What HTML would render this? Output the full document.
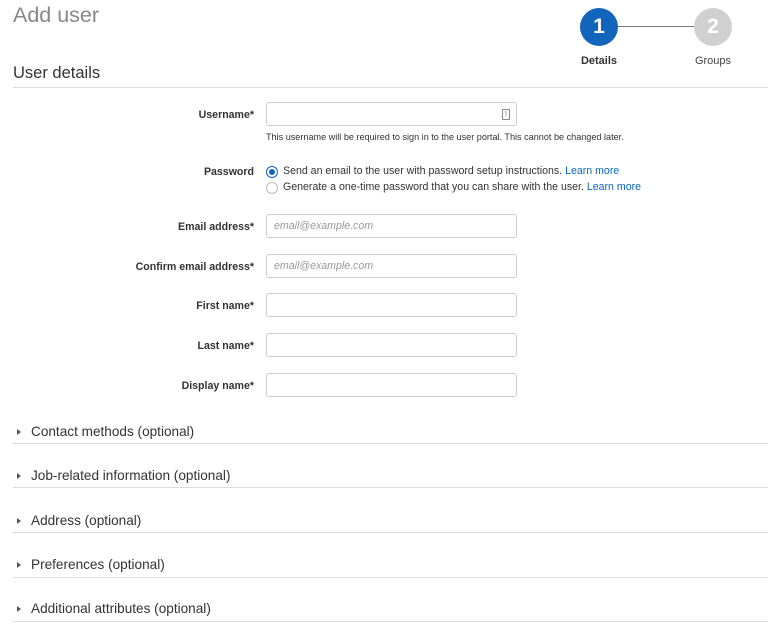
<!DOCTYPE html>
<html><head><style>
body{margin:0;width:768px;height:644px;background:#fff;font-family:"Liberation Sans",Arial,sans-serif;position:relative;overflow:hidden;color:#333}
.a{position:absolute;white-space:nowrap}
.lbl{position:absolute;right:514px;font-size:10.6px;font-weight:bold;color:#333;line-height:14px}
.inp{position:absolute;left:266px;width:249px;height:22px;border:1px solid #ccc;border-radius:3px;background:#fff}
.ph{position:absolute;left:7px;top:5px;font-size:10.6px;font-style:italic;color:#999}
.sec{position:absolute;left:31px;font-size:13.6px;color:#333;line-height:16px}
.tri{position:absolute;left:17px;width:0;height:0;border-left:4px solid #555;border-top:3px solid transparent;border-bottom:3px solid transparent}
.hl{position:absolute;left:13px;right:0;height:1px;background:#ddd}
.rad{position:absolute;left:266px;width:10px;height:10px;border-radius:50%;border:1px solid #bbb;background:#fff}
a{color:#0a66c2;text-decoration:none}
</style></head><body>
<div class="a" style="left:13px;top:3px;font-size:21.5px;color:#888">Add user</div>
<div class="a" style="left:598px;top:26px;width:116px;height:1px;background:#777"></div>
<div class="a" style="left:580px;top:8px;width:38px;height:38px;border-radius:50%;background:#1166bb;color:#fff;font-size:21px;font-weight:bold;text-align:center;line-height:38px">1</div>
<div class="a" style="left:694px;top:8px;width:38px;height:38px;border-radius:50%;background:#d0d0d0;color:#fff;font-size:21px;font-weight:bold;text-align:center;line-height:38px">2</div>
<div class="a" style="left:570px;top:55px;width:58px;text-align:center;font-size:11px;font-weight:bold">Details</div>
<div class="a" style="left:684px;top:55px;width:58px;text-align:center;font-size:11px;color:#444">Groups</div>
<div class="a" style="left:13px;top:64px;font-size:16.5px;color:#333">User details</div>
<div class="hl" style="top:87px"></div>

<div class="lbl" style="top:108px">Username*</div>
<div class="inp" style="top:102px"><div style="position:absolute;right:6px;top:6px;width:6px;height:9px;border:1px solid #888;border-radius:1px;font-size:7px;line-height:9px;text-align:center;color:#555">!</div></div>
<div class="a" style="left:266px;top:132px;font-size:9.1px;color:#333">This username will be required to sign in to the user portal. This cannot be changed later.</div>

<div class="lbl" style="top:165px">Password</div>
<div class="rad" style="top:166px;border-color:#1166bb"><div style="position:absolute;left:2px;top:2px;width:6px;height:6px;border-radius:50%;background:#1166bb"></div></div>
<div class="a" style="left:283px;top:165px;font-size:10.6px">Send an email to the user with password setup instructions. <a>Learn more</a></div>
<div class="rad" style="top:182px"></div>
<div class="a" style="left:283px;top:181px;font-size:10.6px">Generate a one-time password that you can share with the user. <a>Learn more</a></div>

<div class="lbl" style="top:220px">Email address*</div>
<div class="inp" style="top:214px"><div class="ph">email@example.com</div></div>
<div class="lbl" style="top:260px">Confirm email address*</div>
<div class="inp" style="top:254px"><div class="ph">email@example.com</div></div>
<div class="lbl" style="top:299px">First name*</div>
<div class="inp" style="top:293px"></div>
<div class="lbl" style="top:339px">Last name*</div>
<div class="inp" style="top:333px"></div>
<div class="lbl" style="top:379px">Display name*</div>
<div class="inp" style="top:373px"></div>

<div class="tri" style="top:429px"></div><div class="sec" style="top:424px">Contact methods (optional)</div><div class="hl" style="top:443px"></div>
<div class="tri" style="top:473px"></div><div class="sec" style="top:468px">Job-related information (optional)</div><div class="hl" style="top:487px"></div>
<div class="tri" style="top:518px"></div><div class="sec" style="top:513px">Address (optional)</div><div class="hl" style="top:532px"></div>
<div class="tri" style="top:562px"></div><div class="sec" style="top:557px">Preferences (optional)</div><div class="hl" style="top:577px"></div>
<div class="tri" style="top:606px"></div><div class="sec" style="top:601px">Additional attributes (optional)</div><div class="hl" style="top:621px"></div>
</body></html>
